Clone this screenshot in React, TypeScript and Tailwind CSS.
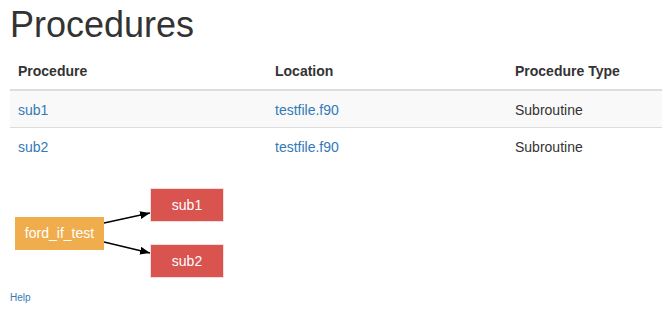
import React from 'react';

const rows = [
  { name: 'sub1', file: 'testfile.f90', kind: 'Subroutine' },
  { name: 'sub2', file: 'testfile.f90', kind: 'Subroutine' },
];

const font = "'Liberation Sans', Arial, sans-serif";

const Graph = () => (
  <svg width="230" height="100" viewBox="0 0 230 100" className="block">
    <defs>
      <marker id="arrow" markerWidth="10" markerHeight="8" refX="10" refY="4" orient="auto" markerUnits="userSpaceOnUse">
        <path d="M0,0 L10,4 L0,8 Z" fill="#000" />
      </marker>
    </defs>
    <line x1="94" y1="43" x2="140" y2="33" stroke="#000" strokeWidth="1.5" markerEnd="url(#arrow)" />
    <line x1="94" y1="62" x2="140" y2="73" stroke="#000" strokeWidth="1.5" markerEnd="url(#arrow)" />
    <rect x="5" y="37" width="89" height="33" fill="#f0ad4e" />
    <text x="49.5" y="58" textAnchor="middle" fill="#fff" fontSize="14" fontFamily={font}>
      ford_if_test
    </text>
    <rect x="140.5" y="8.5" width="73" height="33" fill="#d9534f" stroke="#f6dcdb" />
    <text x="177" y="30" textAnchor="middle" fill="#fff" fontSize="14" fontFamily={font}>
      sub1
    </text>
    <rect x="140.5" y="64.5" width="73" height="33" fill="#d9534f" stroke="#f6dcdb" />
    <text x="177" y="86" textAnchor="middle" fill="#fff" fontSize="14" fontFamily={font}>
      sub2
    </text>
  </svg>
);

export default function App() {
  return (
    <div className="pl-[10px] bg-white text-[#333] text-[14px] font-['Liberation_Sans',Arial,sans-serif] w-[662px] h-[317px] overflow-hidden">
      <h1 className="mt-[5px] mb-[8px] text-[36px] leading-[40px] font-normal">Procedures</h1>

      <table className="w-[652px] table-fixed border-collapse">
        <thead>
          <tr className="border-b-2 border-[#ddd]">
            <th className="w-[257px] p-[8px] text-left font-bold leading-[20px]">Procedure</th>
            <th className="w-[240px] p-[8px] text-left font-bold leading-[20px]">Location</th>
            <th className="p-[8px] text-left font-bold leading-[20px]">Procedure Type</th>
          </tr>
        </thead>
        <tbody>
          {rows.map((r, i) => (
            <tr key={r.name} className={i === 0 ? 'bg-[#f9f9f9]' : 'border-t border-[#ddd]'}>
              <td className="pt-[9px] pb-[7px] px-[8px] leading-[20px]">
                <a href="#" className="text-[#337ab7]">{r.name}</a>
              </td>
              <td className="pt-[9px] pb-[7px] px-[8px] leading-[20px]">
                <a href="#" className="text-[#337ab7]">{r.file}</a>
              </td>
              <td className="pt-[9px] pb-[7px] px-[8px] leading-[20px]">{r.kind}</td>
            </tr>
          ))}
        </tbody>
      </table>

      <div className="mt-[16px]">
        <Graph />
      </div>

      <div className="mt-[12px] text-[10px] leading-[12px]">
        <a href="#" className="text-[#337ab7]">Help</a>
      </div>
    </div>
  );
}
